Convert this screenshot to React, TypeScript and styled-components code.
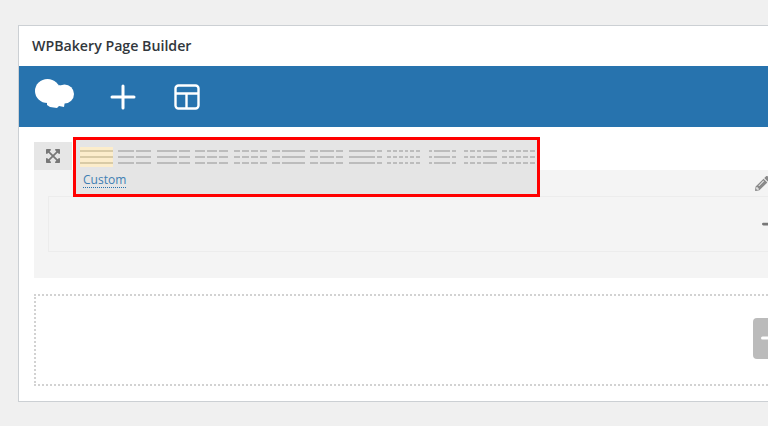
import styled, {createGlobalStyle} from 'styled-components'
import {FaExpandArrowsAlt, FaPencilAlt, FaTrashAlt} from 'react-icons/fa'

const GlobalStyle = createGlobalStyle`
    html, body {
        margin: 0;
        height: 426px;
        overflow: hidden;
        background: #f0f0f0;
        font-family: "Open Sans", "Liberation Sans", sans-serif;
    }
`

const Page = styled.div`
    width: 1510px;
    padding: 25px 0 0 18px;
`

const Panel = styled.section`
    box-sizing: border-box;
    width: 1510px;
    height: 377px;
    background: #fff;
    border: 1px solid #ccd0d4;
`

const PanelTitle = styled.h2`
    box-sizing: border-box;
    height: 40px;
    margin: 0;
    padding: 0 13px 2px;
    display: flex;
    align-items: center;
    font-size: 14.2px;
    font-weight: 600;
    color: #32373c;
`

const Toolbar = styled.div`
    height: 61px;
    padding-left: 16px;
    display: flex;
    align-items: center;
    gap: 35px;
    background: #2773ae;
`

const ToolIcon = styled.svg<{$nudge?: number}>`
    display: block;
    flex: none;
    margin-left: ${({$nudge}) => $nudge ?? 0}px;
`

const Content = styled.div`
    padding: 15px 15px 0;
`

const RowShell = styled.div`
    position: relative;
`

const Expander = styled.div`
    width: 38px;
    height: 28px;
    display: flex;
    align-items: center;
    justify-content: center;
    background: #e6e6e6;
    color: #777;
    font-size: 16px;
`

const Row = styled.div`
    box-sizing: border-box;
    height: 108px;
    padding: 0 14px;
    background: #f4f4f4;
`

const ColumnControls = styled.div`
    height: 26px;
    display: flex;
    align-items: center;
    justify-content: center;
    gap: 6px;
    color: #8a8a8a;
    font-size: 15px;
`

const Column = styled.div`
    height: 56px;
    display: flex;
    align-items: center;
    justify-content: center;
    border: 1px solid #ececec;
    box-sizing: border-box;
    color: #777;
`

const LayoutPopover = styled.div`
    position: absolute;
    top: -5px;
    left: 39px;
    box-sizing: border-box;
    width: 467px;
    height: 60px;
    padding: 7px 4px 0;
    background: #e5e5e5;
    border: 3px solid #f00;
`

const LayoutGrid = styled.div`
    display: grid;
    grid-template-columns: repeat(12, 33px);
    column-gap: 5.4px;
`

const LayoutOption = styled.div<{$active?: boolean; $inset?: number}>`
    height: 20px;
    padding: 0 ${({$inset}) => $inset ?? 0}px;
    display: flex;
    flex-direction: column;
    justify-content: center;
    gap: 4px;
    background: ${({$active}) => ($active ? '#fcedcb' : 'transparent')};
    --bar: ${({$active}) => ($active ? '#d9cba6' : '#bcbcbc')};
`

const LayoutLine = styled.div`
    display: flex;
    gap: 2px;
`

const LayoutBar = styled.span<{$span: number}>`
    flex: ${({$span}) => $span} 1 0;
    height: 2px;
    background: var(--bar);
`

const CustomLink = styled.a`
    display: inline-block;
    margin: 5px 0 0 3px;
    font-size: 12px;
    line-height: 15px;
    color: #3f80b3;
    border-bottom: 1px dotted #2773ae;
`

const AddArea = styled.div`
    box-sizing: border-box;
    height: 92px;
    margin-top: 16px;
    padding-bottom: 4px;
    display: flex;
    align-items: center;
    justify-content: center;
    border: 2px dotted #d2d2d2;
`

const AddButton = styled.div`
    width: 41px;
    height: 41px;
    display: flex;
    align-items: center;
    justify-content: center;
    background: #bbb;
    border-radius: 4px;
`

const layouts: number[][] = [
    [12],
    [6, 6],
    [8, 4],
    [4, 4, 4],
    [3, 3, 3, 3],
    [3, 9],
    [3, 6, 3],
    [10, 2],
    [2, 2, 2, 2, 2, 2],
    [2, 8, 2],
    [2, 2, 2, 6],
    [2.4, 2.4, 2.4, 2.4, 2.4],
]

function PlusGlyph({size, color, weight}: {size: number; color: string; weight: number}) {
    return (
        <svg width={size} height={size} viewBox="0 0 24 24" fill="none" stroke={color} strokeWidth={weight} strokeLinecap="round">
            <path d="M12 1.500v21M1.500 12h21"/>
        </svg>
    )
}

export default function App() {
    return (
        <Page>
            <GlobalStyle/>
            <Panel>
                <PanelTitle>WPBakery Page Builder</PanelTitle>
                <Toolbar>
                    <ToolIcon width="40" height="35" viewBox="0 0 40 35" fill="#fff">
                        <ellipse cx="12.500" cy="12" rx="12.500" ry="12"/>
                        <circle cx="29.500" cy="15" r="9.500"/>
                        <path d="M12 15 24 6l5 2v8l1 6-1 6-5-1-2 2-7-1-3-2z"/>
                    </ToolIcon>
                    <ToolIcon width="26" height="26" viewBox="0 0 26 26" fill="none" stroke="#fff" strokeWidth="3" strokeLinecap="round">
                        <path d="M13 2v22M2 13h22"/>
                    </ToolIcon>
                    <ToolIcon $nudge={3} width="26" height="26" viewBox="0 0 26 26" fill="none" stroke="#fff" strokeWidth="2.400">
                        <rect x="1.500" y="1.500" width="23" height="23" rx="3"/>
                        <path d="M1.500 9.500h23M12.500 9.500v15"/>
                    </ToolIcon>
                </Toolbar>
                <Content>
                    <RowShell>
                        <Expander><FaExpandArrowsAlt/></Expander>
                        <LayoutPopover>
                            <LayoutGrid>
                                {layouts.map((spans, i) => (
                                    <LayoutOption key={i} $active={i === 0} $inset={i === 9 ? 3 : 0}>
                                        {[0, 1, 2].map((line) => (
                                            <LayoutLine key={line}>
                                                {spans.map((span, j) => <LayoutBar key={j} $span={span}/>)}
                                            </LayoutLine>
                                        ))}
                                    </LayoutOption>
                                ))}
                            </LayoutGrid>
                            <CustomLink>Custom</CustomLink>
                        </LayoutPopover>
                        <Row>
                            <ColumnControls>
                                <FaPencilAlt/>
                                <FaTrashAlt/>
                            </ColumnControls>
                            <Column>
                                <PlusGlyph size={22} color="#777" weight={3}/>
                            </Column>
                        </Row>
                    </RowShell>
                    <AddArea>
                        <AddButton>
                            <PlusGlyph size={24} color="#fff" weight={3}/>
                        </AddButton>
                    </AddArea>
                </Content>
            </Panel>
        </Page>
    )
}
